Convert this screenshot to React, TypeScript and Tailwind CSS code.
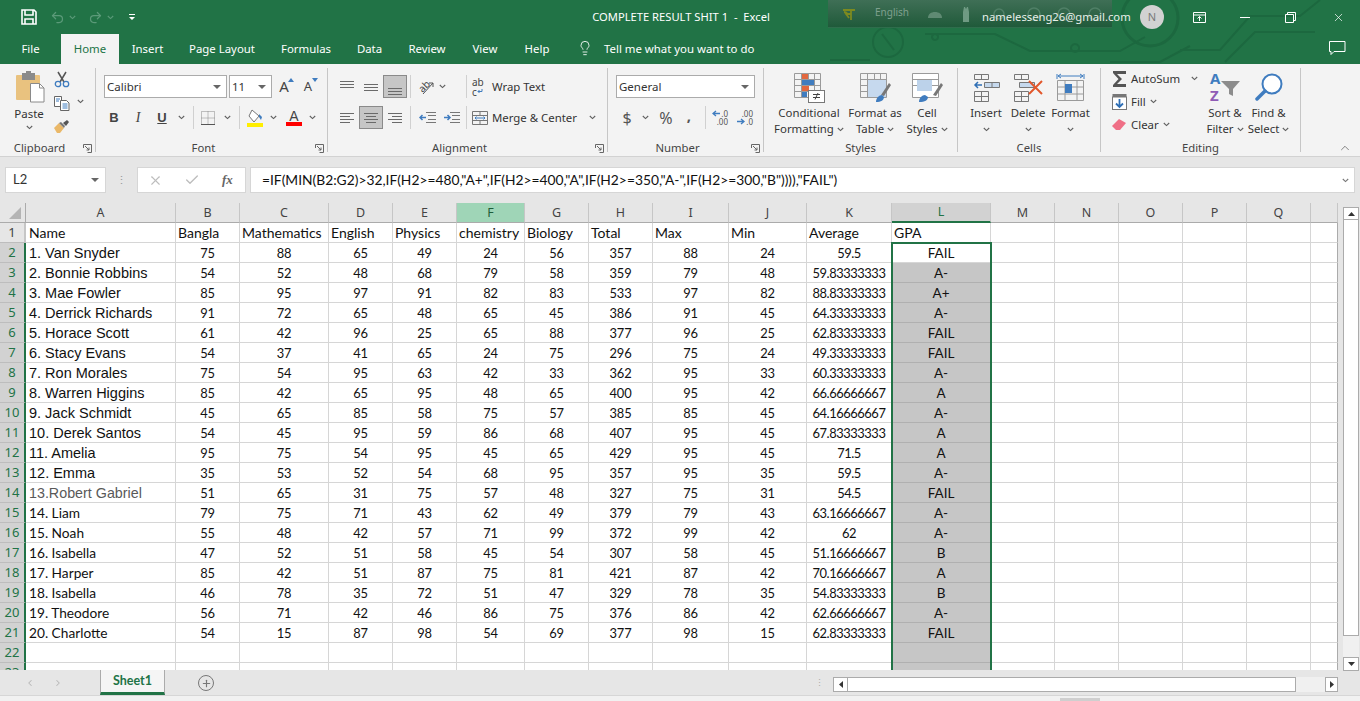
import React from "react";
import { Undo2, Redo2, Lightbulb, X, Check, Plus, ChevronUp, ChevronLeft, ChevronRight } from "lucide-react";

const Chev = ({ c = "#5f5f5f" }: { c?: string }) => (
  <svg width="7" height="5" viewBox="0 0 7 5" fill="none"><path d="M.8 1l2.7 2.6L6.2 1" stroke={c} strokeWidth="1.1" /></svg>
);
const Caret = () => (
  <svg width="8" height="4" viewBox="0 0 8 4"><path d="M0 0h8L4 4z" fill="#666" /></svg>
);
const Launcher = () => (
  <svg width="9" height="9" viewBox="0 0 9 9" fill="none" stroke="#666" strokeWidth="1">
    <path d="M.5 4V.5H8.500V8.500H4.500" /><path d="M2 2l4 4M6 3.500V6H3.500" />
  </svg>
);
const Cell = ({ w = 24, children, active }: { w?: number; children?: React.ReactNode; active?: boolean }) => (
  <div style={{ width: w }} className={`h-[23px] flex items-center justify-center shrink-0 ${active ? "bg-[#c6c6c6] border border-[#8a8a8a]" : ""}`}>{children}</div>
);
const Sep = ({ ml }: { ml: number }) => <div style={{ marginLeft: ml }} className="w-px h-[23px] bg-[#d0d0d0] shrink-0" />;
const Lines = ({ ys, xs }: { ys: number[]; xs: [number, number][] }) => (
  <svg width="16" height="16" viewBox="0 0 16 16" fill="none" stroke="#6a6a6a" strokeWidth="1">
    {ys.map((y, i) => <path key={i} d={`M${xs[i][0]} ${y + 0.5}H${xs[i][1]}`} />)}
  </svg>
);
const Select = ({ w, text, ml = 0 }: { w: number; text: string; ml?: number }) => (
  <div style={{ width: w, marginLeft: ml }} className="h-[23px] bg-white border border-[#ababab] flex items-center justify-between pl-[2px] pr-[5px] shrink-0 text-[11.500px]">
    <span>{text}</span><Caret />
  </div>
);
const Group = ({ w, label, launcher, children }: { w: number; label: string; launcher?: boolean; children: React.ReactNode }) => (
  <div style={{ width: w }} className="flex flex-col shrink-0">
    <div className="h-[76px]">{children}</div>
    <div className={`relative h-[16px] flex items-center justify-center text-[11.300px] text-[#444] ${launcher ? "pr-[16px]" : ""}`}>
      {label}
      {launcher && <span className="absolute right-[3px] top-[4px] flex"><Launcher /></span>}
    </div>
  </div>
);
const GroupSep = () => <div className="w-px my-[4px] bg-[#c6c6c6] shrink-0" />;
const Big = ({ w, icon, lines, chev }: { w: number; icon: React.ReactNode; lines: string[]; chev?: "below" | "inline" }) => (
  <div style={{ width: w }} className="flex flex-col items-center pt-[6px] shrink-0 text-[11.400px] leading-[16px] text-[#333]">
    <div className="h-[35px] flex items-center justify-center">{icon}</div>
    {lines.map((l, i) => (
      <div key={i} className="flex items-center gap-[3px] whitespace-nowrap">
        {l}
        {chev === "inline" && i === lines.length - 1 && <Chev />}
      </div>
    ))}
    {chev === "below" && <div className="h-[16px] flex items-center"><Chev /></div>}
  </div>
);

const PasteIcon = () => (
  <svg width="34" height="32" viewBox="0 0 34 32">
    <rect x="3" y="4" width="24" height="25" rx="1" fill="#e9c27f" />
    <rect x="9" y="2" width="13" height="7" fill="#8a8a8a" />
    <rect x="13" y="0" width="5" height="4" fill="#8a8a8a" />
    <path d="M17.500 12.500h9l4.500 4.500v14h-13.500z" fill="#fff" stroke="#8a8a8a" />
    <path d="M26.500 12.500v4.500h4.500" fill="none" stroke="#8a8a8a" />
  </svg>
);
const Scissors = () => (
  <svg width="16" height="17" viewBox="0 0 16 17" fill="none">
    <path d="M4 1l6 10M12 1L6 11" stroke="#555" strokeWidth="1.500" />
    <circle cx="4" cy="13" r="2.700" stroke="#3f7cbf" strokeWidth="1.300" />
    <circle cx="12" cy="13" r="2.700" stroke="#3f7cbf" strokeWidth="1.300" />
  </svg>
);
const CopyIcon = () => (
  <svg width="16" height="15" viewBox="0 0 16 15" fill="#fff" stroke="#666">
    <path d="M.5.500h7v10h-7z" /><path d="M6.500 4.500h6l2.500 2.500v7.500h-8.500z" />
    <path d="M8.500 8h5M8.500 10h5M8.500 12h5M2 3h4M2 5h3" stroke="#3f7cbf" />
  </svg>
);
const Brush = () => (
  <svg width="17" height="15" viewBox="0 0 17 15">
    <path d="M1 9l5-5 5 5-4 5H4z" fill="#eab868" />
    <path d="M6 4l2 -1 4 4-1 2z" fill="#777" />
    <path d="M10 4l4-3 2 2-3 4z" fill="#555" />
  </svg>
);
const GrowA = ({ up, size }: { up: boolean; size: number }) => (
  <div className="relative flex items-center justify-center w-full h-full text-[#444]" style={{ fontSize: size }}>
    A
    <svg className="absolute right-[2px] top-[3px]" width="6" height="4" viewBox="0 0 6 4"><path d={up ? "M0 4h6L3 0z" : "M0 0h6L3 4z"} fill="#3f7cbf" /></svg>
  </div>
);
const BordersIcon = () => (
  <svg width="14" height="14" viewBox="0 0 14 14" fill="none" stroke="#888" strokeDasharray="1 1">
    <path d="M.5.500h13v13h-13zM7 .5v13M.5 7h13" />
    <path d="M0 13.500h14" strokeDasharray="none" stroke="#555" />
  </svg>
);
const FillIcon = () => (
  <svg width="17" height="18" viewBox="0 0 17 18">
    <path d="M5 1l7 6-5 6-5-6z" fill="#fff" stroke="#777" />
    <path d="M12 5l3 3-1 3-2-3z" fill="#3f7cbf" />
    <rect x="0" y="14" width="16" height="4" fill="#ffee00" />
  </svg>
);
const WrapIcon = () => (
  <div className="w-[16px] h-[20px] text-[10px] leading-[10px] text-[#444] flex flex-col">
    <span>ab</span><span className="flex items-center">c<svg width="6" height="5" viewBox="0 0 6 5" fill="none"><path d="M5 0v2.500H1M2.500 1L1 2.500 2.500 4" stroke="#3f7cbf" /></svg></span>
  </div>
);
const MergeIcon = () => (
  <svg width="16" height="14" viewBox="0 0 16 14" fill="none" stroke="#777">
    <path d="M.5.500h15v13H.5zM.5 4.500h15M.5 9.500h15M8 .5v4M8 9.500v4" />
    <path d="M3 7h10M4.500 5.500L3 7l1.500 1.500M11.500 5.500L13 7l-1.500 1.500" stroke="#3f7cbf" />
  </svg>
);
const Indent = ({ dir }: { dir: "l" | "r" }) => (
  <svg width="17" height="13" viewBox="0 0 17 13" fill="none">
    <path d="M7 1.500h10M9 4.500h8M9 8.500h8M7 11.500h10" stroke="#777" />
    {dir === "l"
      ? <path d="M7 6.500H1M3.500 4L1 6.500 3.500 9" stroke="#3f7cbf" strokeWidth="1.500" />
      : <path d="M1 6.500h6M4.500 4L7 6.500 4.500 9" stroke="#3f7cbf" strokeWidth="1.500" />}
  </svg>
);
const Orient = () => (
  <div className="relative w-[18px] h-[18px]">
    <span className="absolute left-[1px] top-[3px] text-[10px] leading-[10px] -rotate-45 text-[#444]">ab</span>
    <svg className="absolute inset-0" width="18" height="18" viewBox="0 0 18 18" fill="none"><path d="M6 16L16 5M12 5h4v4" stroke="#555" /></svg>
  </div>
);
const DecIcon = ({ inc }: { inc?: boolean }) => (
  <div className="relative w-[16px] h-[16px] text-[8px] leading-[8px] text-[#555] text-right">
    <div>{inc ? ".00" : ".0"}</div><div>{inc ? ".0" : ".00"}</div>
    <svg className={`absolute left-0 ${inc ? "top-[8px]" : "top-0"}`} width="8" height="7" viewBox="0 0 8 7" fill="none"><path d={inc ? "M0 3.500h7M4 1l3 2.500L4 6" : "M8 3.500H1M4 1L1 3.500 4 6"} stroke="#3f7cbf" strokeWidth="1.300" /></svg>
  </div>
);
const Grid = () => (<g fill="none" stroke="#9a9a9a"><path d="M.5.500h26v24h-26zM.5 6.500h26M.5 12.500h26M.5 18.500h26M7.500.5v24M14.500.5v24M20.500.5v24" /></g>);
const CondIcon = () => (
  <svg width="31" height="30" viewBox="0 0 31 30">
    <Grid />
    <rect x="8" y="1" width="6" height="5" fill="#e2673e" /><rect x="8" y="7" width="12" height="5" fill="#3f7cbf" />
    <rect x="8" y="13" width="7" height="5" fill="#e2673e" /><rect x="8" y="19" width="5" height="5" fill="#3f7cbf" />
    <rect x="14.500" y="17.500" width="16" height="12" fill="#fff" stroke="#777" />
    <path d="M19 21.500h7M19 24.500h7M24 20l-3 6.500" stroke="#444" fill="none" />
  </svg>
);
const TableIcon = () => (
  <svg width="31" height="30" viewBox="0 0 31 30">
    <Grid />
    <rect x="8" y="7" width="18" height="17" fill="#c6d9ee" />
    <path d="M21 22l8-12 2 2-7 11z" fill="#777" />
    <path d="M16 29c0-4 3-7 6-7l2 2c0 3-3 5-8 5z" fill="#3f7cbf" />
  </svg>
);
const CellStyleIcon = () => (
  <svg width="31" height="30" viewBox="0 0 31 30">
    <path d="M.5.500h26v24H.5zM.5 6.500h26M.5 12.500h26" fill="#fff" stroke="#9a9a9a" />
    <rect x="5" y="7" width="15" height="11" fill="#bcd2ea" />
    <path d="M21 22l8-12 2 2-7 11z" fill="#777" />
    <path d="M7 29c0-4 3-7 6-7l3 2c0 3-3 5-9 5z" fill="#3f7cbf" />
  </svg>
);
const InsertIcon = () => (
  <svg width="27" height="28" viewBox="0 0 27 28" fill="none" stroke="#777">
    <path d="M1.500 .5h14v5h-14zM8.500.5v5M1.500 17.500h14v10h-14zM8.500 17.500v10M1.500 22.500h14" />
    <path d="M11.500 8.500h15v5h-15zM19 8.500v5" fill="#c6d9ee" />
    <path d="M9 11H2M5 8L2 11l3 3" stroke="#2f6fb5" strokeWidth="1.500" />
  </svg>
);
const DeleteIcon = () => (
  <svg width="30" height="28" viewBox="0 0 30 28" fill="none" stroke="#777">
    <path d="M1.500 .5h14v5h-14zM8.500.5v5M1.500 17.500h14v10h-14zM8.500 17.500v10M1.500 22.500h14" />
    <path d="M6.500 8.500h15v5h-15z" fill="#c6d9ee" />
    <path d="M16 7l13 13M29 7L16 20" stroke="#e2572b" strokeWidth="2" />
  </svg>
);
const FormatIcon = () => (
  <svg width="29" height="30" viewBox="0 0 29 30" fill="none" stroke="#9a9a9a">
    <path d="M1 1v5M28 1v5M2 3h25M2 3l3-2M2 3l3 2M27 3l-3-2M27 3l-3 2" stroke="#3f7cbf" />
    <path d="M1.500 7.500h26v20h-26zM1.500 14h26M1.500 21h26M9 7.500v20M21 7.500v20" />
    <rect x="9" y="11" width="7" height="9" fill="#3f7cbf" stroke="none" />
  </svg>
);
const Sigma = () => (
  <svg width="15" height="16" viewBox="0 0 15 16"><path d="M1 0h13v3H5l5 5-5 5h9v3H1v-2l5.500-6L1 2z" fill="#555" /></svg>
);
const FillDown = () => (
  <svg width="15" height="16" viewBox="0 0 15 16" fill="none">
    <rect x=".5" y="0" width="14" height="3" fill="#777" />
    <rect x=".5" y="3" width="14" height="12.500" stroke="#777" fill="#fff" />
    <path d="M7.500 5v8M4 9.500l3.500 3.500L11 9.500" stroke="#2f6fb5" strokeWidth="1.800" />
  </svg>
);
const Eraser = () => (
  <svg width="14" height="13" viewBox="0 0 14 13"><path d="M0 8l7-7 7 4-6 7H4z" fill="#ef6f86" /></svg>
);
const SortIcon = () => (
  <div className="relative w-[30px] h-[30px]">
    <span className="absolute left-0 top-[-3px] font-bold text-[15px] leading-[17px] text-[#3f7cbf]">A</span>
    <span className="absolute left-0 top-[14px] font-bold text-[15px] leading-[17px] text-[#8f5bb5]">Z</span>
    <svg className="absolute left-[11px] top-[6px]" width="19" height="18" viewBox="0 0 19 18"><path d="M0 2h19l-7 8v7l-4-2v-5z" fill="#8c8c8c" /></svg>
  </div>
);
const FindIcon = () => (
  <svg width="28" height="30" viewBox="0 0 28 30" fill="none">
    <circle cx="17" cy="11" r="9.500" stroke="#3f7cbf" strokeWidth="2" fill="#fff" />
    <path d="M10 18L2 26" stroke="#3f7cbf" strokeWidth="3.500" strokeLinecap="round" />
  </svg>
);

const colW = [26, 150, 64, 89, 64, 64, 68, 64, 64, 76, 78, 85, 99, 64, 64, 64, 64, 64, 27];
const colNames = ["A", "B", "C", "D", "E", "F", "G", "H", "I", "J", "K", "L", "M", "N", "O", "P", "Q", ""];
const heads = ["Name", "Bangla", "Mathematics", "English", "Physics", "chemistry", "Biology", "Total", "Max", "Min", "Average", "GPA"];
const rows: (string | number)[][] = [
  ["1. Van Snyder", 75, 88, 65, 49, 24, 56, 357, 88, 24, "59.5", "FAIL"],
  ["2. Bonnie Robbins", 54, 52, 48, 68, 79, 58, 359, 79, 48, "59.83333333", "A-"],
  ["3. Mae Fowler", 85, 95, 97, 91, 82, 83, 533, 97, 82, "88.83333333", "A+"],
  ["4. Derrick Richards", 91, 72, 65, 48, 65, 45, 386, 91, 45, "64.33333333", "A-"],
  ["5. Horace Scott", 61, 42, 96, 25, 65, 88, 377, 96, 25, "62.83333333", "FAIL"],
  ["6. Stacy Evans", 54, 37, 41, 65, 24, 75, 296, 75, 24, "49.33333333", "FAIL"],
  ["7. Ron Morales", 75, 54, 95, 63, 42, 33, 362, 95, 33, "60.33333333", "A-"],
  ["8. Warren Higgins", 85, 42, 65, 95, 48, 65, 400, 95, 42, "66.66666667", "A"],
  ["9. Jack Schmidt", 45, 65, 85, 58, 75, 57, 385, 85, 45, "64.16666667", "A-"],
  ["10. Derek Santos", 54, 45, 95, 59, 86, 68, 407, 95, 45, "67.83333333", "A"],
  ["11. Amelia", 95, 75, 54, 95, 45, 65, 429, 95, 45, "71.5", "A"],
  ["12. Emma", 35, 53, 52, 54, 68, 95, 357, 95, 35, "59.5", "A-"],
  ["13.Robert Gabriel", 51, 65, 31, 75, 57, 48, 327, 75, 31, "54.5", "FAIL"],
  ["14. Liam", 79, 75, 71, 43, 62, 49, 379, 79, 43, "63.16666667", "A-"],
  ["15. Noah", 55, 48, 42, 57, 71, 99, 372, 99, 42, "62", "A-"],
  ["16. Isabella", 47, 52, 51, 58, 45, 54, 307, 58, 45, "51.16666667", "B"],
  ["17. Harper", 85, 42, 51, 87, 75, 81, 421, 87, 42, "70.16666667", "A"],
  ["18. Isabella", 46, 78, 35, 72, 51, 47, 329, 78, 35, "54.83333333", "B"],
  ["19. Theodore", 56, 71, 42, 46, 86, 75, 376, 86, 42, "62.66666667", "A-"],
  ["20. Charlotte", 54, 15, 87, 98, 54, 69, 377, 98, 15, "62.83333333", "FAIL"],
];
const gridTemplate = colW.map((w) => `${w}px`).join(" ");
const line = "border-r border-b border-[#d6d6d6]";
const lato = "font-['Lato',sans-serif]";

const fontFor = (n: number, i: number) => {
  if (i === 0) {
    if (n === 14) return "pt-[2px] font-['Liberation_Sans',Arial,sans-serif] text-[14.300px]";
    if (n < 14) return "pt-[2px] font-['Liberation_Sans',Arial,sans-serif] text-[14.500px]";
    return `pt-[1px] ${lato} text-[13.700px]`;
  }
  if (i === 11) return `pt-[1px] ${lato} text-[13.500px]`;
  if (i === 10) return `pt-[2px] ${lato} text-[12.900px] tracking-[-0.45px]`;
  return `pt-[2px] ${lato} text-[12.900px] tracking-[-0.2px]`;
};

const Row = ({ n, data }: { n: number; data?: (string | number)[] }) => {
  const tail = Array.from({ length: 6 });
  return (
    <>
      <div className="h-[20px] bg-[#d2d2d2] text-[#217346] text-[13px] flex items-center justify-center border-r-2 border-r-[#217346] border-b border-b-[#bdbdbd]">{n}</div>
      {Array.from({ length: 12 }).map((_, i) => {
        const v = data ? data[i] : "";
        const sel = i === 11 && n > 2;
        const grey = n === 14 && i === 0 ? "text-[#595959]" : "text-[#111]";
        return (
          <div key={i} className={`h-[20px] ${line} ${i === 0 ? "pl-[3px] justify-start" : "justify-center"} flex items-center whitespace-nowrap ${fontFor(n, i)} ${grey} ${sel ? "bg-[#c6c6c6] border-b-[#b0b0b0]" : ""}`}>{v}</div>
        );
      })}
      {tail.map((_, i) => <div key={i} className={`h-[20px] ${line} ${i === 5 ? "border-r-[#ababab]" : ""}`} />)}
    </>
  );
};

export default function App() {
  return (
    <div className="w-[1360px] h-[701px] overflow-hidden flex flex-col bg-[#e6e6e6] font-['Noto_Sans','Open_Sans',sans-serif] text-[#333]">
      {/* Title + tabs */}
      <div className="relative bg-[#217346] h-[64px] shrink-0 text-white">
        <svg className="absolute left-0 top-0" width="1360" height="64" viewBox="0 0 1360 64" fill="none" stroke="#1c683f" strokeWidth="2">
          <circle cx="888" cy="42" r="15" />
          <path d="M882 34l12 16" />
          <circle cx="1150" cy="18" r="28" strokeWidth="3" />
          <path d="M830 60h40M925 34h70l35 17h90l25 -14M935 34a3 3 0 1 0 .1 0M1075 44a4 4 0 1 0 .1 0M1180 50h40l30-34h50l20-16M1225 62l30-30h60M1110 62h50l30-16" />
        </svg>
        {/* language bar overlay */}
        <div className="absolute left-[828px] top-0 w-[284px] h-[28px] bg-gradient-to-b from-[#3f6f56] to-[#1f5a3a] border-b border-[#2f6d4c] flex items-center text-[10px] text-[#7fa08e]">
          <svg className="ml-[14px]" width="14" height="14" viewBox="0 0 14 14" fill="none" stroke="#7d8a20" strokeWidth="1.800"><path d="M1 3h12M9 3v10M9 7H4l3 4M2 5c3 0 4 2 2 3" /></svg>
          <span className="ml-[19px] mb-[2px]">English</span>
          <svg className="ml-[18px]" width="16" height="8" viewBox="0 0 16 8"><path d="M1 8c0-4 3-6 7-6s7 2 7 6z" fill="#5f8a73" /></svg>
          <svg className="ml-[18px]" width="10" height="16" viewBox="0 0 10 16"><path d="M2 16V6l1-5h1l1 2 1-2h1l1 5v10z" fill="#6f9a83" /></svg>
          <svg className="ml-[21px]" width="110" height="16" viewBox="0 0 110 16" fill="none" stroke="#4f7f66" strokeWidth="1.500">
            <circle cx="7" cy="8" r="5" /><circle cx="42" cy="8" r="6" /><circle cx="72" cy="8" r="6" /><circle cx="103" cy="8" r="6" />
          </svg>
        </div>
        <div className="relative h-[34px] flex items-center">
          <svg className="ml-[21px]" width="16" height="16" viewBox="0 0 16 16" fill="none" stroke="#fff" strokeWidth="1.600">
            <path d="M1 1h12l2 2v12H1z" /><path d="M4 1v5h8V1M4 15v-5h8v5" />
          </svg>
          <Undo2 className="ml-[13px] text-[#5b9a79]" size={15} strokeWidth={2} />
          <span className="ml-[4px] w-[7px] flex"><Chev c="#5b9a79" /></span>
          <Redo2 className="ml-[12px] text-[#5b9a79]" size={15} strokeWidth={2} />
          <span className="ml-[4px] w-[7px] flex"><Chev c="#5b9a79" /></span>
          <svg className="ml-[14px]" width="8" height="8" viewBox="0 0 8 8"><path d="M1 1h6v1H1zM1 4h6L4 7z" fill="#fff" /></svg>
          <div className="ml-[450px] text-[11.200px] whitespace-pre w-[190px] text-center">COMPLETE RESULT SHIT 1  -  Excel</div>
          <div className="ml-[206px] text-[11.250px] text-[#e8efe9] w-[150px] whitespace-nowrap">namelesseng26@gmail.com</div>
          <div className="ml-[8px] w-[24px] h-[24px] rounded-full bg-[#d2d2d2] text-[#7a7a7a] text-[11px] flex items-center justify-center">N</div>
          <svg className="ml-[29px]" width="13" height="11" viewBox="0 0 13 11" fill="none" stroke="#fff"><path d="M.5.500h12v10H.5zM.5 3h12M6.500 9V4.500M4.500 6.500l2-2 2 2" /></svg>
          <div className="ml-[34px] w-[10px] h-px bg-white" />
          <svg className="ml-[35px]" width="11" height="11" viewBox="0 0 11 11" fill="none" stroke="#fff"><path d="M.5 2.500h8v8h-8zM2.500 2.500v-2h8v8h-2" /></svg>
          <X className="ml-[36px] text-white" size={13} strokeWidth={1.300} />
        </div>
        <div className="relative h-[30px] flex items-stretch text-[11.400px]">
          {[["File", 61], ["Home", 58], ["Insert", 57], ["Page Layout", 92], ["Formulas", 76], ["Data", 51], ["Review", 64], ["View", 52], ["Help", 52]].map(([t, w]) => (
            <div key={t as string} style={{ width: w as number }} className={`flex items-center justify-center ${t === "Home" ? "bg-[#f3f3f3] text-[#217346]" : ""}`}>{t}</div>
          ))}
          <Lightbulb className="ml-[14px] mt-[6px]" size={16} strokeWidth={1.300} />
          <div className="ml-[11px] flex items-center">Tell me what you want to do</div>
          <svg className="absolute left-[1329px] top-[7px]" width="17" height="15" viewBox="0 0 17 15" fill="none" stroke="#fff"><path d="M.5.500h15.500v10H5l-3 3v-3H.5z" /></svg>
        </div>
      </div>

      {/* Ribbon */}
      <div className="h-[92px] shrink-0 bg-[#f3f3f3] flex relative">
        <Group w={95} label="Clipboard" launcher>
          <div className="flex pl-[14px] pt-[7px]">
            <div className="w-[30px] flex flex-col items-center text-[11.500px] leading-[16px]">
              <div className="ml-[2px]"><PasteIcon /></div>
              <div className="mt-[3px]">Paste</div>
              <div className="mt-[3px] flex"><Chev /></div>
            </div>
            <div className="ml-[9px] flex flex-col items-center gap-[8px]">
              <Scissors /><CopyIcon /><Brush />
            </div>
            <div className="ml-[7px] pt-[28px]"><Chev /></div>
          </div>
        </Group>
        <GroupSep />
        <Group w={231} label="Font" launcher>
          <div className="pt-[11px]">
            <div className="flex items-center pl-[8px]">
              <Select w={123} text="Calibri" />
              <Select w={43} ml={2} text="11" />
              <Cell><GrowA up size={15} /></Cell>
              <Cell><GrowA up={false} size={13} /></Cell>
            </div>
            <div className="flex items-center mt-[8px] pl-[6px] text-[14px]">
              <Cell><b className="font-['Liberation_Sans'] text-[#444] text-[13px]">B</b></Cell>
              <Cell><i className="font-['Liberation_Serif'] text-[#444] text-[14px]">I</i></Cell>
              <Cell><u className="font-['Liberation_Sans'] font-bold text-[#444] text-[13px]">U</u></Cell>
              <Cell w={14}><Chev /></Cell>
              <Sep ml={5} />
              <div className="ml-[4px]"><Cell w={20}><BordersIcon /></Cell></div>
              <Cell w={18}><Chev /></Cell>
              <Sep ml={3} />
              <div className="ml-[4px]"><Cell w={22}><FillIcon /></Cell></div>
              <Cell w={14}><Chev /></Cell>
              <div className="ml-[3px]">
                <Cell w={22}>
                  <div className="flex flex-col items-center leading-[12px] text-[14px] font-['Liberation_Sans'] text-[#444]">A<div className="w-[16px] h-[4px] bg-[#ff0000]" /></div>
                </Cell>
              </div>
              <Cell w={14}><Chev /></Cell>
            </div>
          </div>
        </Group>
        <GroupSep />
        <Group w={279} label="Alignment" launcher>
          <div className="pt-[11px]">
            <div className="flex items-center pl-[7px]">
              <Cell><Lines ys={[2, 5, 8]} xs={[[1, 15], [1, 15], [1, 15]]} /></Cell>
              <Cell><Lines ys={[5, 8, 11]} xs={[[1, 15], [1, 15], [1, 15]]} /></Cell>
              <Cell active><Lines ys={[9, 12, 15]} xs={[[1, 15], [1, 15], [1, 15]]} /></Cell>
              <Sep ml={3} />
              <div className="ml-[4px]"><Cell w={22}><Orient /></Cell></div>
              <Cell w={10}><Chev /></Cell>
              <Sep ml={19} />
              <div className="ml-[2px]"><Cell w={22}><WrapIcon /></Cell></div>
              <div className="ml-[1px] text-[11.400px]">Wrap Text</div>
            </div>
            <div className="flex items-center mt-[8px] pl-[7px]">
              <Cell><Lines ys={[3, 6, 9, 12]} xs={[[1, 15], [1, 11], [1, 15], [1, 11]]} /></Cell>
              <Cell active><Lines ys={[3, 6, 9, 12]} xs={[[1, 15], [3, 13], [1, 15], [3, 13]]} /></Cell>
              <Cell><Lines ys={[3, 6, 9, 12]} xs={[[1, 15], [5, 15], [1, 15], [5, 15]]} /></Cell>
              <Sep ml={3} />
              <div className="ml-[4px]"><Cell><Indent dir="l" /></Cell></div>
              <Cell><Indent dir="r" /></Cell>
              <Sep ml={3} />
              <div className="ml-[2px]"><Cell w={22}><MergeIcon /></Cell></div>
              <div className="ml-[1px] w-[87px] text-[11.400px] whitespace-nowrap">Merge &amp; Center</div>
              <Cell w={26}><Chev /></Cell>
            </div>
          </div>
        </Group>
        <GroupSep />
        <Group w={155} label="Number" launcher>
          <div className="pt-[11px]">
            <div className="pl-[8px]"><Select w={139} text="General" /></div>
            <div className="flex items-center mt-[8px] pl-[8px] text-[#555]">
              <Cell w={22}><span className="text-[16px]">$</span></Cell>
              <Cell w={14}><Chev /></Cell>
              <div className="ml-[2px]"><Cell><span className="text-[16px]">%</span></Cell></div>
              <Cell w={22}><span className="text-[15px] font-bold mb-[4px]">,</span></Cell>
              <Sep ml={5} />
              <div className="ml-[3px]"><Cell w={22}><DecIcon /></Cell></div>
              <div className="ml-[3px]"><Cell w={22}><DecIcon inc /></Cell></div>
            </div>
          </div>
        </Group>
        <GroupSep />
        <Group w={193} label="Styles">
          <div className="flex pl-[6px]">
            <Big w={78} icon={<CondIcon />} lines={["Conditional", "Formatting"]} chev="inline" />
            <Big w={54} icon={<TableIcon />} lines={["Format as", "Table"]} chev="inline" />
            <Big w={50} icon={<CellStyleIcon />} lines={["Cell", "Styles"]} chev="inline" />
          </div>
        </Group>
        <GroupSep />
        <Group w={142} label="Cells">
          <div className="flex pl-[7px]">
            <Big w={42} icon={<InsertIcon />} lines={["Insert"]} chev="below" />
            <Big w={42} icon={<DeleteIcon />} lines={["Delete"]} chev="below" />
            <Big w={43} icon={<FormatIcon />} lines={["Format"]} chev="below" />
          </div>
        </Group>
        <GroupSep />
        <Group w={199} label="Editing">
          <div className="flex pl-[11px]">
            <div className="w-[91px] pt-[3px] text-[11.400px]">
              <div className="h-[23px] flex items-center"><span className="w-[19px] flex"><Sigma /></span>AutoSum<span className="ml-[11px] flex"><Chev /></span></div>
              <div className="h-[23px] flex items-center"><span className="w-[19px] flex"><FillDown /></span>Fill<span className="ml-[4px] flex"><Chev /></span></div>
              <div className="h-[23px] flex items-center"><span className="w-[19px] flex"><Eraser /></span>Clear<span className="ml-[4px] flex"><Chev /></span></div>
            </div>
            <Big w={44} icon={<SortIcon />} lines={["Sort &", "Filter"]} chev="inline" />
            <Big w={43} icon={<FindIcon />} lines={["Find &", "Select"]} chev="inline" />
          </div>
        </Group>
        <GroupSep />
        <ChevronUp className="absolute left-[1338px] top-[77px] text-[#555]" size={14} strokeWidth={1.200} />
      </div>
      <div className="h-px bg-[#d2d2d2] shrink-0" />

      {/* Formula bar */}
      <div className="h-[46px] shrink-0 flex pt-[10px] pl-[5px]">
        <div className={`w-[101px] h-[26px] bg-white border border-[#d6d6d6] flex items-center justify-between pl-[7px] pr-[6px] text-[13px] ${lato}`}>
          <span>L2</span><Caret />
        </div>
        <div className="w-[31px] h-[26px] flex items-center justify-center text-[#999] text-[11px] leading-[6px]">⋮</div>
        <div className="w-[109px] h-[26px] bg-white border border-[#d6d6d6] flex items-center pl-[10px] text-[#bdbdbd]">
          <X size={15} strokeWidth={1.800} />
          <Check className="ml-[21px]" size={16} strokeWidth={2} />
          <i className="ml-[22px] text-[13px] font-['Liberation_Serif'] font-bold text-[#666]">fx</i>
        </div>
        <div className={`ml-[4px] w-[1105px] h-[26px] bg-white border border-[#d6d6d6] flex items-center justify-between pl-[11px] pr-[5px] text-[#111] text-[13.800px] ${lato}`}>
          <span className="whitespace-nowrap">=IF(MIN(B2:G2)&gt;32,IF(H2&gt;=480,"A+",IF(H2&gt;=400,"A",IF(H2&gt;=350,"A-",IF(H2&gt;=300,"B")))),"FAIL")</span>
          <Chev c="#777" />
        </div>
      </div>

      {/* Sheet */}
      <div className="h-[467px] shrink-0 flex">
        <div className="relative w-[1338px] h-[467px] overflow-hidden bg-white">
          <div className="grid" style={{ gridTemplateColumns: gridTemplate, gridAutoRows: "20px" }}>
            <div className="h-[20px] bg-[#e6e6e6] border-r border-b border-[#ababab] flex items-end justify-end pr-[4px] pb-[3px]">
              <svg width="12" height="12" viewBox="0 0 12 12"><path d="M12 0v12H0z" fill="#b4b4b4" /></svg>
            </div>
            {colNames.map((c) => (
              <div key={c || "x"} className={`h-[20px] pt-[1px] flex items-center justify-center text-[12.500px] border-r border-r-[#c6c6c6] border-b ${c === "L" ? "bg-[#d2d2d2] text-[#217346] border-b-2 border-b-[#217346]" : c === "F" ? "bg-[#9fd5b7] text-[#1f5c3a] border-b-[#ababab]" : "bg-[#e6e6e6] text-[#444] border-b-[#ababab]"}`}>{c}</div>
            ))}
            <div className="h-[20px] bg-[#e6e6e6] text-[#444] text-[13px] flex items-center justify-center border-r-2 border-r-[#c6c6c6] border-b border-b-[#bdbdbd]">1</div>
            {heads.map((h, i) => (
              <div key={h} className={`h-[20px] ${line} ${i === 0 ? "pl-[3px]" : "pl-[2px]"} flex items-center whitespace-nowrap ${lato} text-[14px] text-[#111]`}>{h}</div>
            ))}
            {Array.from({ length: 6 }).map((_, i) => <div key={i} className={`h-[20px] ${line} ${i === 5 ? "border-r-[#ababab]" : ""}`} />)}
            {rows.map((r, i) => <Row key={i} n={i + 2} data={r} />)}
            <Row n={22} />
            <Row n={23} />
          </div>
          <div className="absolute left-[891px] top-[39px] w-[101px] h-[440px] border-2 border-[#217346] pointer-events-none" />
        </div>
        <div className="w-[22px] flex flex-col pl-[5px] pr-[1px] pt-[4px] h-[467px]">
          <div className="h-[13px] bg-white border border-[#ababab] flex items-center justify-center"><svg width="7" height="4" viewBox="0 0 7 4"><path d="M0 4h7L3.500 0z" fill="#333" /></svg></div>
          <div className="h-[416px] bg-white border-x border-b border-[#ababab]" />
          <div className="flex-1 bg-[#f0f0f0]" />
          <div className="h-[14px] mb-[-1px] bg-white border border-[#ababab] flex items-center justify-center"><svg width="7" height="4" viewBox="0 0 7 4"><path d="M0 0h7L3.500 4z" fill="#333" /></svg></div>
        </div>
      </div>

      {/* Tabs bar */}
      <div className="h-[25px] shrink-0 flex items-start">
        <div className="w-[100px] h-[25px] flex items-center pl-[25px] text-[#b9b9b9]">
          <ChevronLeft size={10} strokeWidth={2.500} />
          <ChevronRight className="ml-[18px]" size={10} strokeWidth={2.500} />
        </div>
        <div className={`w-[65px] h-[25px] bg-[#f5f5f5] border-x border-[#ababab] border-b-[3px] border-b-[#217346] flex items-center justify-center text-[#217346] font-bold text-[12.500px] ${lato}`}>Sheet1</div>
        <div className="ml-[33px] mt-[5px] w-[16px] h-[16px] rounded-full border border-[#777] flex items-center justify-center text-[#777]"><Plus size={11} strokeWidth={2.500} /></div>
        <div className="ml-[601px] mt-[7px] w-[4px] h-[12px] text-[#aaa] text-[9px] leading-[12px]">⋮</div>
        <div className="ml-[14px] mt-[7px] w-[505px] h-[15px] flex bg-[#f0f0f0]">
          <div className="w-[15px] bg-white border border-[#ababab] flex items-center justify-center"><svg width="4" height="7" viewBox="0 0 4 7"><path d="M4 0v7L0 3.500z" fill="#333" /></svg></div>
          <div className="w-[448px] bg-white border-y border-r border-[#ababab]" />
          <div className="w-[29px]" />
          <div className="w-[13px] bg-white border border-[#ababab] flex items-center justify-center"><svg width="4" height="7" viewBox="0 0 4 7"><path d="M0 0v7l4-3.500z" fill="#333" /></svg></div>
        </div>
      </div>
      <div className="flex-1 bg-[#f1f1f1] border-t border-[#d6d6d6]">
        <div className="ml-[1060px] mt-[2px] w-[40px] h-[3px] bg-[#cfcfcf]" />
      </div>
    </div>
  );
}
